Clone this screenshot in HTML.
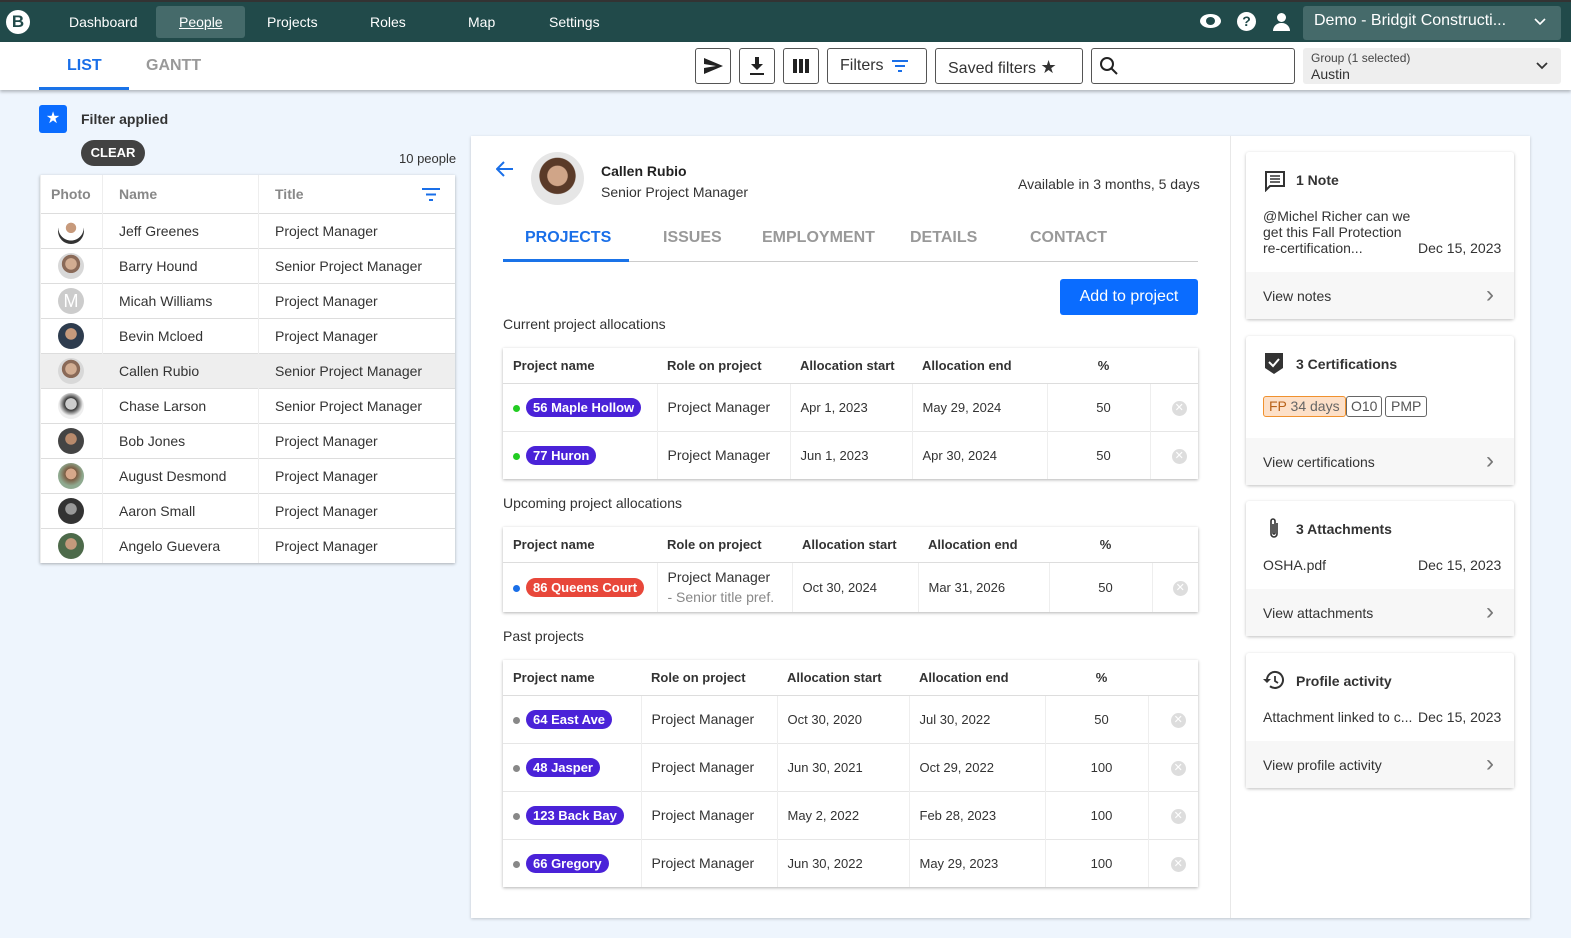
<!DOCTYPE html>
<html><head><meta charset="utf-8"><style>
*{box-sizing:border-box;margin:0;padding:0}
html,body{overflow:hidden}
body{width:1571px;height:938px;background:#eef5fd;font-family:"Liberation Sans",Arial,sans-serif;color:#222;position:relative;font-size:14px}
.a{position:absolute;white-space:nowrap}
.nav{left:0;top:0;width:1571px;height:42px;background:#214a4a;border-top:2px solid #333}
.nav .i{color:#fff;font-size:14px;top:12px}
.sub{left:0;top:42px;width:1571px;height:48px;background:#fff;box-shadow:0 2px 3px rgba(0,0,0,.25)}
.btn{border:1px solid #555;border-radius:3px;background:#fff;height:36px;top:48px}
.tbl{background:#fff;box-shadow:0 1px 3px rgba(0,0,0,.3)}
.lt td{height:35px;border-top:1px solid #ddd;border-left:1px solid #eee;font-size:14px;color:#333;padding-left:16px}
.av{width:26px;height:26px;border-radius:50%;display:inline-block;vertical-align:middle;background:radial-gradient(circle at 50% 42%,#d2ad92 0 28%,#8a6a58 30% 45%,#d8d8d8 47% 100%)}
.card{background:#fff;box-shadow:0 1px 3px rgba(0,0,0,.25);border-radius:3px;left:1246px;width:268px}
.foot{position:absolute;left:0;right:0;bottom:0;height:47px;background:#f7f7f7;padding:16px 17px;font-size:14px;color:#333}
.foot:after{content:"›";position:absolute;right:20px;top:9px;font-size:24px;color:#777}
.ch{font-weight:bold;font-size:14px;color:#333}
.pt{position:absolute;left:503px;width:695px;background:#fff;box-shadow:0 1px 3px rgba(0,0,0,.3)}
.pt table{border-collapse:collapse;width:100%}
.pt th{height:35px;font-size:13px;font-weight:bold;color:#333;text-align:left;padding-left:10px;border-bottom:1px solid #ddd}
.pt td{height:48px;font-size:13px;color:#333;padding-left:10px;border-left:1px solid #eee;border-top:1px solid #e6e6e6}
.pt td:first-child{border-left:0}
.pill{display:inline-block;color:#fff;font-weight:bold;font-size:13px;border-radius:10px;padding:2px 7px;background:#4a22d8}
.dot{display:inline-block;width:7px;height:7px;border-radius:50%;margin-right:6px;vertical-align:middle}
.x{display:inline-block;width:15px;height:15px;border-radius:50%;background:#ddd;color:#fff;font-size:11px;text-align:center;line-height:15px}
.role{font-size:14px!important}
</style></head><body>
<div class="a nav">
 <div class="a" style="left:6px;top:8px;width:24px;height:24px;border-radius:50%;background:#fff;color:#214a4a;font-weight:bold;font-size:17px;text-align:center;line-height:24px">B</div>
 <div class="a i" style="left:69px">Dashboard</div>
 <div class="a" style="left:156px;top:4px;width:89px;height:32px;background:#456a6a;border-radius:3px"></div>
 <div class="a i" style="left:179px;text-decoration:underline">People</div>
 <div class="a i" style="left:267px">Projects</div>
 <div class="a i" style="left:370px">Roles</div>
 <div class="a i" style="left:468px">Map</div>
 <div class="a i" style="left:549px">Settings</div>
 <div class="a" style="left:1200px;top:12px;width:21px;height:14px;border-radius:50%;background:#fff"><div class="a" style="left:6px;top:3px;width:9px;height:8px;border-radius:50%;background:#214a4a"></div></div>
 <div class="a" style="left:1237px;top:10px;width:19px;height:19px;border-radius:50%;background:#fff;color:#214a4a;font-weight:bold;font-size:14px;text-align:center;line-height:19px">?</div>
 <div class="a" style="left:1277px;top:11px;width:9px;height:9px;border-radius:50%;background:#fff"></div>
 <div class="a" style="left:1273px;top:21px;width:17px;height:8px;border-radius:8px 8px 0 0;background:#fff"></div>
 <div class="a" style="left:1303px;top:4px;width:258px;height:34px;background:#456a6a;border-radius:3px"></div>
 <div class="a" style="left:1314px;top:10px;color:#fff;font-size:16px">Demo - Bridgit Constructi...</div>
 <svg class="a" style="left:1534px;top:16px" width="12" height="8" viewBox="0 0 12 8"><path d="M1 1l5 5 5-5" stroke="#fff" stroke-width="1.6" fill="none"/></svg>
</div>
<div class="a sub">
 <div class="a" style="left:67px;top:15px;color:#1a6fe8;font-weight:bold;font-size:16px">LIST</div>
 <div class="a" style="left:146px;top:15px;color:#999;font-weight:bold;font-size:16px">GANTT</div>
 <div class="a" style="left:39px;top:45px;width:90px;height:3px;background:#1a73e8"></div>
</div>
<div class="a btn" style="left:695px;width:36px"><svg width="34" height="34" viewBox="0 0 34 34"><path d="M8 9 L27 17 L8 25 L8 19 L20 17 L8 15Z" fill="#222"/></svg></div>
<div class="a btn" style="left:739px;width:36px"><svg width="34" height="34" viewBox="0 0 34 34"><path d="M15 8h4v7h4l-6 6-6-6h4z M10 24h14v2H10z" fill="#222"/></svg></div>
<div class="a btn" style="left:783px;width:36px"><svg width="34" height="34" viewBox="0 0 34 34"><path d="M9 10h4v14H9zM15 10h4v14h-4zM21 10h4v14h-4z" fill="#222"/></svg></div>
<div class="a btn" style="left:827px;width:100px;padding:8px 12px;font-size:16px;color:#333">Filters <svg style="vertical-align:-2px;margin-left:4px" width="16" height="12" viewBox="0 0 16 12"><path d="M0 1h16M3 6h10M6 11h4" stroke="#1a6fe8" stroke-width="2"/></svg></div>
<div class="a btn" style="left:935px;width:148px;padding:8px 12px;font-size:16px;color:#333">Saved filters <span style="font-size:18px">★</span></div>
<div class="a btn" style="left:1091px;width:204px"><svg width="30" height="34" viewBox="0 0 30 34"><circle cx="15" cy="15" r="6" fill="none" stroke="#222" stroke-width="2"/><path d="M19 19l6 6" stroke="#222" stroke-width="2"/></svg></div>
<div class="a" style="left:1303px;top:48px;width:258px;height:36px;background:#eee;border-radius:3px">
 <div class="a" style="left:8px;top:3px;font-size:12px;color:#444">Group (1 selected)</div>
 <div class="a" style="left:8px;top:18px;font-size:14px;color:#333">Austin</div>
 <svg class="a" style="left:233px;top:14px" width="12" height="8" viewBox="0 0 12 8"><path d="M1 1l5 5 5-5" stroke="#333" stroke-width="1.8" fill="none"/></svg>
</div>
<div class="a" style="left:39px;top:105px;width:28px;height:28px;background:#0a6cff;border-radius:3px;color:#fff;text-align:center;line-height:28px;font-size:16px">★</div>
<div class="a" style="left:81px;top:111px;font-size:14px;font-weight:bold;color:#333">Filter applied</div>
<div class="a" style="left:81px;top:140px;width:64px;height:26px;background:#424242;border-radius:13px;color:#fff;font-weight:bold;font-size:13px;text-align:center;line-height:26px">CLEAR</div>
<div class="a" style="left:399px;top:151px;font-size:13px;color:#333">10 people</div>
<div class="a tbl" style="left:40px;top:175px;width:415px">
<table class="lt" style="border-collapse:collapse;width:100%">
<tr><td style="width:62px;border-top:0;color:#888;font-weight:bold;padding-left:10px;height:38px">Photo</td><td style="width:156px;border-top:0;color:#888;font-weight:bold">Name</td><td style="border-top:0;color:#888;font-weight:bold;position:relative">Title<svg style="position:absolute;right:15px;top:13px" width="18" height="13" viewBox="0 0 18 13"><path d="M0 1h18M4 6.5h10M7 12h4" stroke="#1a6fe8" stroke-width="2"/></svg></td></tr>
<tr><td style="padding-left:17px"><span class="av" style="background:radial-gradient(circle at 50% 38%,#c79a7c 0 24%,#fff 26% 60%,#333 62%)"></span></td><td>Jeff Greenes</td><td>Project Manager</td></tr>
<tr><td style="padding-left:17px"><span class="av"></span></td><td>Barry Hound</td><td>Senior Project Manager</td></tr>
<tr><td style="padding-left:17px"><span class="av" style="background:#ccc;color:#fff;text-align:center;line-height:26px;font-size:18px">M</span></td><td>Micah Williams</td><td>Project Manager</td></tr>
<tr><td style="padding-left:17px"><span class="av" style="background:radial-gradient(circle at 50% 42%,#c79a7c 0 28%,#2e3c4e 30%)"></span></td><td>Bevin Mcloed</td><td>Project Manager</td></tr>
<tr style="background:#eee"><td style="padding-left:17px"><span class="av"></span></td><td>Callen Rubio</td><td>Senior Project Manager</td></tr>
<tr><td style="padding-left:17px"><span class="av" style="background:radial-gradient(circle at 50% 42%,#ccc 0 28%,#333 30%,#eee 60%)"></span></td><td>Chase Larson</td><td>Senior Project Manager</td></tr>
<tr><td style="padding-left:17px"><span class="av" style="background:radial-gradient(circle at 50% 42%,#b88a6c 0 28%,#444 30%)"></span></td><td>Bob Jones</td><td>Project Manager</td></tr>
<tr><td style="padding-left:17px"><span class="av" style="background:radial-gradient(circle at 50% 42%,#d6a88a 0 26%,#7a5a40 28%,#8faa90 60%)"></span></td><td>August Desmond</td><td>Project Manager</td></tr>
<tr><td style="padding-left:17px"><span class="av" style="background:radial-gradient(circle at 50% 42%,#999 0 28%,#333 30%)"></span></td><td>Aaron Small</td><td>Project Manager</td></tr>
<tr><td style="padding-left:17px"><span class="av" style="background:radial-gradient(circle at 50% 42%,#c49a7c 0 28%,#4d6a4a 30%)"></span></td><td>Angelo Guevera</td><td>Project Manager</td></tr>
</table></div>
<div class="a" style="left:471px;top:136px;width:1059px;height:782px;background:#fff;box-shadow:0 1px 3px rgba(0,0,0,.2)"></div>
<div class="a" style="left:1230px;top:136px;width:1px;height:782px;background:#e8e8e8"></div>
<svg class="a" style="left:496px;top:161px" width="18" height="16" viewBox="0 0 18 16"><path d="M17 8H2M8 1L1 8l7 7" stroke="#1a6fe8" stroke-width="2" fill="none"/></svg>
<div class="a" style="left:531px;top:152px;width:53px;height:53px;border-radius:50%;background:radial-gradient(circle at 50% 45%,#d0a588 0 25%,#5a3a28 27% 45%,#e6e6e6 47%)"></div>
<div class="a" style="left:601px;top:163px;font-weight:bold;font-size:14px">Callen Rubio</div>
<div class="a" style="left:601px;top:184px;font-size:14px;color:#333">Senior Project Manager</div>
<div class="a" style="left:1018px;top:176px;font-size:14px;color:#333">Available in 3 months, 5 days</div>
<div class="a" style="left:525px;top:229px;font-size:16px;font-weight:bold;color:#1a6fe8">PROJECTS</div>
<div class="a" style="left:663px;top:229px;font-size:16px;font-weight:bold;color:#999">ISSUES</div>
<div class="a" style="left:762px;top:229px;font-size:16px;font-weight:bold;color:#999">EMPLOYMENT</div>
<div class="a" style="left:910px;top:229px;font-size:16px;font-weight:bold;color:#999">DETAILS</div>
<div class="a" style="left:1030px;top:229px;font-size:16px;font-weight:bold;color:#999">CONTACT</div>
<div class="a" style="left:503px;top:261px;width:695px;height:1px;background:#ccc"></div>
<div class="a" style="left:503px;top:259px;width:126px;height:3px;background:#1a73e8"></div>
<div class="a" style="left:1060px;top:279px;width:138px;height:36px;background:#0a6cff;border-radius:3px;color:#fff;font-size:16px;text-align:center;line-height:36px">Add to project</div>
<div class="a" style="left:503px;top:316px;font-size:14px;color:#333">Current project allocations</div>
<div class="pt" style="top:348px"><table>
<tr><th style="width:154px">Project name</th><th style="width:133px">Role on project</th><th style="width:122px">Allocation start</th><th style="width:135px">Allocation end</th><th style="width:103px;text-align:center">%</th><th></th></tr>
<tr><td><span class="dot" style="background:#2c2"></span><span class="pill">56 Maple Hollow</span></td><td class="role">Project Manager</td><td>Apr 1, 2023</td><td>May 29, 2024</td><td style="text-align:center">50</td><td style="text-align:center"><span class="x">✕</span></td></tr>
<tr><td><span class="dot" style="background:#2c2"></span><span class="pill">77 Huron</span></td><td class="role">Project Manager</td><td>Jun 1, 2023</td><td>Apr 30, 2024</td><td style="text-align:center">50</td><td style="text-align:center"><span class="x">✕</span></td></tr>
</table></div>
<div class="a" style="left:503px;top:495px;font-size:14px;color:#333">Upcoming project allocations</div>
<div class="pt" style="top:527px"><table>
<tr><th style="width:154px">Project name</th><th style="width:135px">Role on project</th><th style="width:126px">Allocation start</th><th style="width:131px">Allocation end</th><th style="width:103px;text-align:center">%</th><th></th></tr>
<tr><td><span class="dot" style="background:#1a6fe8"></span><span class="pill" style="background:#e8473a">86 Queens Court</span></td><td class="role" style="height:50px;line-height:20px">Project Manager<br><span style="color:#888">- Senior title pref.</span></td><td>Oct 30, 2024</td><td>Mar 31, 2026</td><td style="text-align:center">50</td><td style="text-align:center"><span class="x">✕</span></td></tr>
</table></div>
<div class="a" style="left:503px;top:628px;font-size:14px;color:#333">Past projects</div>
<div class="pt" style="top:660px"><table>
<tr><th style="width:138px">Project name</th><th style="width:136px">Role on project</th><th style="width:132px">Allocation start</th><th style="width:136px">Allocation end</th><th style="width:103px;text-align:center">%</th><th></th></tr>
<tr><td><span class="dot" style="background:#888"></span><span class="pill">64 East Ave</span></td><td class="role">Project Manager</td><td>Oct 30, 2020</td><td>Jul 30, 2022</td><td style="text-align:center">50</td><td style="text-align:center"><span class="x">✕</span></td></tr>
<tr><td><span class="dot" style="background:#888"></span><span class="pill">48 Jasper</span></td><td class="role">Project Manager</td><td>Jun 30, 2021</td><td>Oct 29, 2022</td><td style="text-align:center">100</td><td style="text-align:center"><span class="x">✕</span></td></tr>
<tr><td><span class="dot" style="background:#888"></span><span class="pill">123 Back Bay</span></td><td class="role">Project Manager</td><td>May 2, 2022</td><td>Feb 28, 2023</td><td style="text-align:center">100</td><td style="text-align:center"><span class="x">✕</span></td></tr>
<tr><td><span class="dot" style="background:#888"></span><span class="pill">66 Gregory</span></td><td class="role">Project Manager</td><td>Jun 30, 2022</td><td>May 29, 2023</td><td style="text-align:center">100</td><td style="text-align:center"><span class="x">✕</span></td></tr>
</table></div>

<div class="a card" style="top:152px;height:167px">
 <svg class="a" style="left:18px;top:18px" width="22" height="22" viewBox="0 0 22 22"><path d="M2 2h18v14H6l-4 4z" fill="none" stroke="#333" stroke-width="2"/><path d="M6 6h10M6 9h10M6 12h10" stroke="#333" stroke-width="1.5"/></svg>
 <div class="a ch" style="left:50px;top:20px">1 Note</div>
 <div class="a" style="left:17px;top:56px;font-size:14px;line-height:16px;color:#333">@Michel Richer can we<br>get this Fall Protection<br>re-certification...</div>
 <div class="a" style="left:172px;top:88px;font-size:14px;color:#333">Dec 15, 2023</div>
 <div class="foot">View notes</div>
</div>
<div class="a card" style="top:336px;height:149px">
 <svg class="a" style="left:18px;top:16px" width="20" height="22" viewBox="0 0 20 22"><path d="M1 1h18v15l-9 6-9-6z" fill="#333"/><path d="M5 10l4 4 6-7" stroke="#fff" stroke-width="2" fill="none"/></svg>
 <div class="a ch" style="left:50px;top:20px">3 Certifications</div>
 <div class="a" style="left:17px;top:60px;height:21px;padding:1px 5px;border:1px solid #f0912e;background:#fde0c8;border-radius:3px;font-size:14px;color:#666"><span style="color:#b8621a">FP</span> 34 days</div>
 <div class="a" style="left:100px;top:60px;height:21px;padding:1px 4px;border:1px solid #666;border-radius:3px;font-size:14px;color:#555">O10</div>
 <div class="a" style="left:139px;top:60px;height:21px;padding:1px 5px;border:1px solid #666;border-radius:3px;font-size:14px;color:#555">PMP</div>
 <div class="foot">View certifications</div>
</div>
<div class="a card" style="top:501px;height:135px">
 <svg class="a" style="left:22px;top:16px" width="12" height="24" viewBox="0 0 12 24"><path d="M9 6v11a3 3 0 0 1-6 0V4a2 2 0 0 1 4 0v12a1 1 0 0 1-2 0V7" stroke="#333" stroke-width="1.6" fill="none"/></svg>
 <div class="a ch" style="left:50px;top:20px">3 Attachments</div>
 <div class="a" style="left:17px;top:56px;font-size:14px;color:#333">OSHA.pdf</div>
 <div class="a" style="left:172px;top:56px;font-size:14px;color:#333">Dec 15, 2023</div>
 <div class="foot">View attachments</div>
</div>
<div class="a card" style="top:653px;height:135px">
 <svg class="a" style="left:17px;top:17px" width="22" height="20" viewBox="0 0 22 20"><path d="M4 10a8 8 0 1 1 3 6.2" stroke="#333" stroke-width="2" fill="none"/><path d="M0 9l4 4 4-4z" fill="#333"/><path d="M12 6v5l3 2" stroke="#333" stroke-width="1.8" fill="none"/></svg>
 <div class="a ch" style="left:50px;top:20px">Profile activity</div>
 <div class="a" style="left:17px;top:56px;font-size:14px;color:#333">Attachment linked to c...</div>
 <div class="a" style="left:172px;top:56px;font-size:14px;color:#333">Dec 15, 2023</div>
 <div class="foot">View profile activity</div>
</div>
</body></html>
